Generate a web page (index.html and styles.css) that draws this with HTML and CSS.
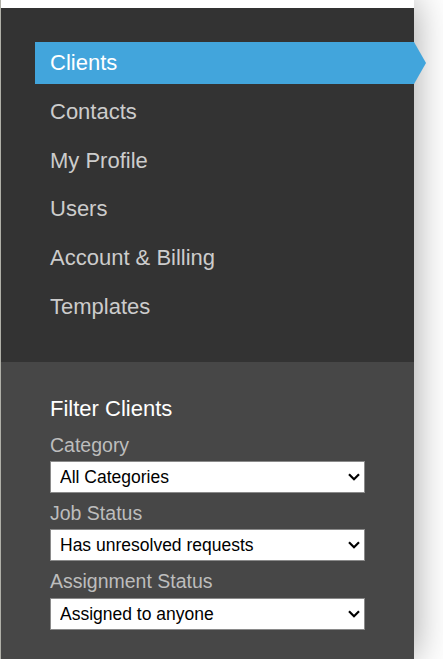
FILE: index.html
```html
<!DOCTYPE html>
<html lang="en">
<head>
<meta charset="utf-8">
<title>Clients</title>
<link rel="stylesheet" href="styles.css">
</head>
<body>
<div class="page">
  <aside class="sidebar">
    <div class="topbar"></div>
    <nav class="nav">
      <a class="nav-item active" href="#">Clients</a>
      <a class="nav-item" href="#">Contacts</a>
      <a class="nav-item" href="#">My Profile</a>
      <a class="nav-item" href="#">Users</a>
      <a class="nav-item" href="#">Account &amp; Billing</a>
      <a class="nav-item" href="#">Templates</a>
    </nav>
    <section class="filters">
      <h2 class="filters-title">Filter Clients</h2>
      <div class="field">
        <label class="field-label" for="cat">Category</label>
        <div class="select-wrap">
          <select id="cat" class="field-select">
            <option>All Categories</option>
          </select>
          <svg class="chevron" width="12" height="8" viewBox="0 0 12 8" aria-hidden="true"><path d="M1 1.2 L6 6.2 L11 1.2" fill="none" stroke="#000" stroke-width="2.2"/></svg>
        </div>
      </div>
      <div class="field">
        <label class="field-label" for="job">Job Status</label>
        <div class="select-wrap">
          <select id="job" class="field-select">
            <option>Has unresolved requests</option>
          </select>
          <svg class="chevron" width="12" height="8" viewBox="0 0 12 8" aria-hidden="true"><path d="M1 1.2 L6 6.2 L11 1.2" fill="none" stroke="#000" stroke-width="2.2"/></svg>
        </div>
      </div>
      <div class="field">
        <label class="field-label" for="asg">Assignment Status</label>
        <div class="select-wrap">
          <select id="asg" class="field-select">
            <option>Assigned to anyone</option>
          </select>
          <svg class="chevron" width="12" height="8" viewBox="0 0 12 8" aria-hidden="true"><path d="M1 1.2 L6 6.2 L11 1.2" fill="none" stroke="#000" stroke-width="2.2"/></svg>
        </div>
      </div>
    </section>
  </aside>
</div>
</body>
</html>
```
FILE: styles.css
```css
html, body {
  margin: 0;
  padding: 0;
  background: #ffffff;
  font-family: "Liberation Sans", Arial, sans-serif;
}
.page {
  display: flex;
  height: 659px;
  overflow: hidden;
}
.sidebar {
  width: 413px;
  border-left: 1px solid #b0b0a8;
  display: flex;
  flex-direction: column;
  box-shadow: 0 0 36px rgba(0, 0, 0, 0.38);
  position: relative;
  z-index: 1;
}
.topbar {
  height: 8px;
  background: #ffffff;
}
.nav {
  background: #333333;
  padding: 34px 0 34px 34px;
  display: flex;
  flex-direction: column;
  gap: 6.8px;
}
.nav-item {
  position: relative;
  display: block;
  height: 42px;
  line-height: 42px;
  padding-left: 15px;
  font-size: 22px;
  color: #cccccc;
  text-decoration: none;
}
.nav-item.active {
  background: #42a5dc;
  color: #ffffff;
}
.nav-item.active::after {
  content: "";
  position: absolute;
  top: 0;
  right: -12px;
  border-left: 12px solid #42a5dc;
  border-top: 21px solid transparent;
  border-bottom: 21px solid transparent;
}
.filters {
  flex: 1;
  background: #474747;
  padding: 34.3px 49px 0 49px;
}
.filters-title {
  margin: 0 0 13.5px 0;
  font-size: 22px;
  font-weight: normal;
  line-height: 25px;
  color: #ffffff;
}
.field {
  display: flex;
  flex-direction: column;
  margin-bottom: 10px;
}
.field-label {
  font-size: 19.5px;
  line-height: 21px;
  color: #bdbdbd;
  margin-bottom: 5.3px;
}
.select-wrap {
  position: relative;
  width: 315px;
  height: 32px;
}
.field-select {
  -webkit-appearance: none;
  appearance: none;
  width: 100%;
  height: 32px;
  box-sizing: border-box;
  border: 1px solid #8a8a8a;
  border-radius: 0;
  background: #ffffff;
  color: #000000;
  font-family: "Liberation Sans", Arial, sans-serif;
  font-size: 17.5px;
  padding: 0 30px 0 9px;
  margin: 0;
}
.chevron {
  position: absolute;
  right: 5px;
  top: 12px;
  pointer-events: none;
}
```
